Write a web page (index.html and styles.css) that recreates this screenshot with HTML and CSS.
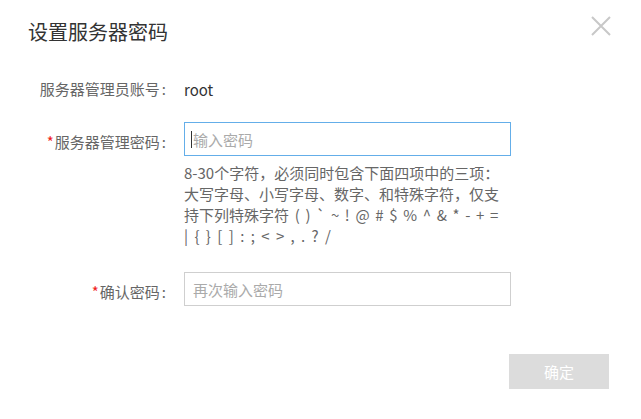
FILE: index.html
```html
<!DOCTYPE html>
<html lang="zh-CN">
<head>
<meta charset="utf-8">
<title>设置服务器密码</title>
<link rel="stylesheet" href="styles.css">
</head>
<body>
<div class="dialog">
  <div class="dialog-header">
    <h2 class="dialog-title">设置服务器密码</h2>
    <button class="dialog-close" type="button" aria-label="关闭">
      <svg viewBox="0 0 20 20" width="20" height="20"><path d="M1 1 L19 19 M19 1 L1 19" stroke="#c8c8c8" stroke-width="2" fill="none"/></svg>
    </button>
  </div>
  <form class="form">
    <div class="form-row form-row-static">
      <label class="form-label">服务器管理员账号<span class="colon">:</span></label>
      <div class="form-value">root</div>
    </div>
    <div class="form-row">
      <label class="form-label form-label-input"><span class="req">*</span>服务器管理密码<span class="colon">:</span></label>
      <div class="form-field">
        <span class="input-wrap">
          <input class="input is-focus" type="password" placeholder="输入密码">
          <span class="caret"></span>
        </span>
        <p class="hint">8-30个字符，必须同时包含下面四项中的三项：<br>大写字母、小写字母、数字、和特殊字符，仅支<br>持下列特殊字符<span class="symbols-a"> ( ) ` ~ ! @ # $ % ^ &amp; * - + =</span><br><span class="symbols-b">| { } [ ] : ; &lt; &gt; , . ? /</span></p>
      </div>
    </div>
    <div class="form-row form-row-confirm">
      <label class="form-label form-label-input"><span class="req">*</span>确认密码<span class="colon">:</span></label>
      <div class="form-field">
        <span class="input-wrap">
          <input class="input" type="password" placeholder="再次输入密码">
        </span>
      </div>
    </div>
  </form>
  <div class="dialog-footer">
    <button class="btn-ok" type="button">确定</button>
  </div>
</div>
</body>
</html>
```
FILE: styles.css
```css
* { box-sizing: border-box; }
html, body { margin: 0; padding: 0; background: #fff; }
body {
  font-family: "Noto Sans CJK SC", "Noto Sans", sans-serif;
  font-size: 15px;
  color: #333;
}
.dialog { width: 641px; height: 419px; padding: 16px 32px 0 28px; }
.dialog-header { display: flex; justify-content: space-between; align-items: flex-start; }
.dialog-title {
  margin: 4px 0 0;
  font-size: 20px;
  line-height: 24px;
  font-weight: normal;
  color: #333;
}
.dialog-close {
  width: 20px; height: 20px; padding: 0; margin: 0 -2px 0 0;
  border: 0; background: none; display: block;
}
.dialog-close svg { display: block; }
.form { margin-top: 28px; }
.form-row { display: flex; align-items: flex-start; }
.form-row-static { align-items: center; height: 34px; margin-bottom: 16px; }
.form-row-confirm { margin-top: 26px; }
.form-label {
  width: 138px;
  margin-right: 18px;
  text-align: right;
  line-height: 34px;
  color: #666;
  white-space: nowrap;
}
.form-label-input { padding-top: 3px; }
.colon { padding-left: 2px; }
.req { color: #f01e1e; margin-right: 1px; }
.form-value { color: #333; }
.form-field { width: 327px; }
.input-wrap { display: block; position: relative; }
.input {
  display: block;
  width: 327px;
  height: 34px;
  margin: 0;
  padding: 0 8px;
  border: 1px solid #cfcfcf;
  border-radius: 0;
  outline: none;
  font-family: inherit;
  font-size: 15px;
  color: #333;
  background: #fff;
}
.input::placeholder { color: #aaa; }
.input.is-focus { border-color: #64aee9; }
.caret {
  position: absolute;
  left: 7px; top: 9px;
  width: 1px; height: 17px;
  background: #333;
}
.hint {
  margin: 6px 0 0;
  font-size: 15px;
  line-height: 21px;
  color: #666;
  white-space: nowrap;
}
.symbols-a { word-spacing: 2.3px; }
.symbols-b { word-spacing: 3px; }
.dialog-footer { display: flex; justify-content: flex-end; margin-top: 45px; }
.btn-ok {
  width: 100px; height: 35px;
  border: 0; border-radius: 0;
  background: #dcdcdc;
  color: #fff;
  font-family: inherit;
  font-size: 15px;
}
```
